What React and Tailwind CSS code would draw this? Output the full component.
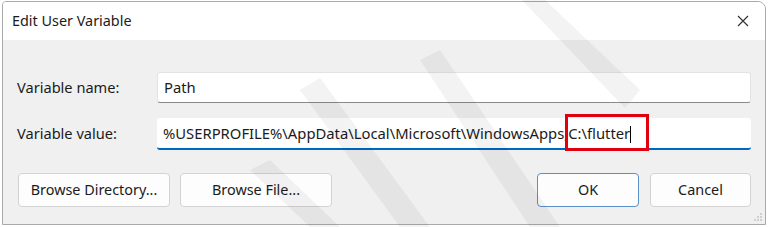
import React from "react";

const font = { fontFamily: '"Noto Sans", "Open Sans", "DejaVu Sans", sans-serif' };

const Btn = ({ children, primary, className = "" }) => (
  <button
    className={
      "h-[34px] rounded-[4px] border bg-[#fdfdfd] text-[14.4px] text-[#1b1b1b] " +
      (primary ? "border-[#5b8fc7] " : "border-[#d3d3d3] ") +
      className
    }
  >
    {children}
  </button>
);

export default function App() {
  return (
    <div className="relative w-[768px] h-[227px] bg-white overflow-hidden" style={font}>
      <div className="absolute left-[2px] top-[1px] w-[764px] h-[224px] rounded-tr-[8px] rounded-tl-[4px] border border-[#a9a9a9] bg-[#f0f0f0] flex flex-col overflow-hidden">
        {/* title bar */}
        <div className="h-[38px] bg-white flex items-center justify-between pl-[9px] pr-[14px] shrink-0">
          <span className="text-[14.4px] text-[#1b1b1b]">Edit User Variable</span>
          <svg width="12" height="12" viewBox="0 0 12 12" className="mr-[2px]">
            <path d="M1 1 L11 11 M11 1 L1 11" stroke="#333" strokeWidth="1.2" />
          </svg>
        </div>

        {/* body */}
        <div className="flex flex-col pl-[14px] pr-[14px] pt-[32px]">
          <div className="flex items-center h-[31px]">
            <span className="w-[140px] text-[14.6px] text-[#1b1b1b]">Variable name:</span>
            <div className="flex-1 h-[31px] bg-white border border-[#e3e3e3] border-b-[#8a8a8a] rounded-[3px] flex items-center px-[6px] text-[14.8px] text-[#1b1b1b]">
              Path
            </div>
          </div>
          <div className="flex items-center h-[32px] mt-[15px]">
            <span className="w-[140px] text-[14.6px] text-[#1b1b1b]">Variable value:</span>
            <div className="flex-1 h-[32px] bg-white border-b-2 border-[#0067c0] rounded-[3px] flex items-center px-[6px] text-[14.8px] text-[#1b1b1b] whitespace-nowrap">
              <span>%USERPROFILE%\AppData\Local\Microsoft\WindowsApps;</span>
              <span className="relative">
                C:\flutter
                <span className="inline-block w-px h-[17px] bg-black align-middle" />
                <span className="absolute -left-[3px] -top-[8px] -right-[18px] -bottom-[7px] border-[3px] border-[#e0000f]" />
              </span>
            </div>
          </div>

          <div className="flex items-center mt-[23px]">
            <Btn className="w-[152px] ml-[1px]">Browse Directory...</Btn>
            <Btn className="w-[152px] ml-[10px]">Browse File...</Btn>
            <div className="flex-1" />
            <Btn primary className="w-[102px]">OK</Btn>
            <Btn className="w-[101px] ml-[11px]">Cancel</Btn>
          </div>
        </div>

        <svg width="8" height="8" viewBox="0 0 8 8" className="absolute right-[3px] bottom-[3px]">
          <circle cx="7" cy="1" r="0.7" fill="#999" />
          <circle cx="7" cy="4" r="0.7" fill="#999" />
          <circle cx="4" cy="4" r="0.7" fill="#999" />
          <circle cx="7" cy="7" r="0.7" fill="#999" />
          <circle cx="4" cy="7" r="0.7" fill="#999" />
          <circle cx="1" cy="7" r="0.7" fill="#999" />
        </svg>
      </div>

      {/* watermark */}
      <svg width="768" height="227" className="absolute inset-0 pointer-events-none" viewBox="0 0 768 227">
        <g fill="#000" opacity="0.045">
          <polygon points="522,0 545,0 640,90 625,108" />
          <polygon points="300,90 320,78 430,227 400,227" />
          <polygon points="250,170 270,160 340,227 310,227" />
          <polygon points="420,60 440,50 560,227 530,227" />
        </g>
      </svg>
    </div>
  );
}
